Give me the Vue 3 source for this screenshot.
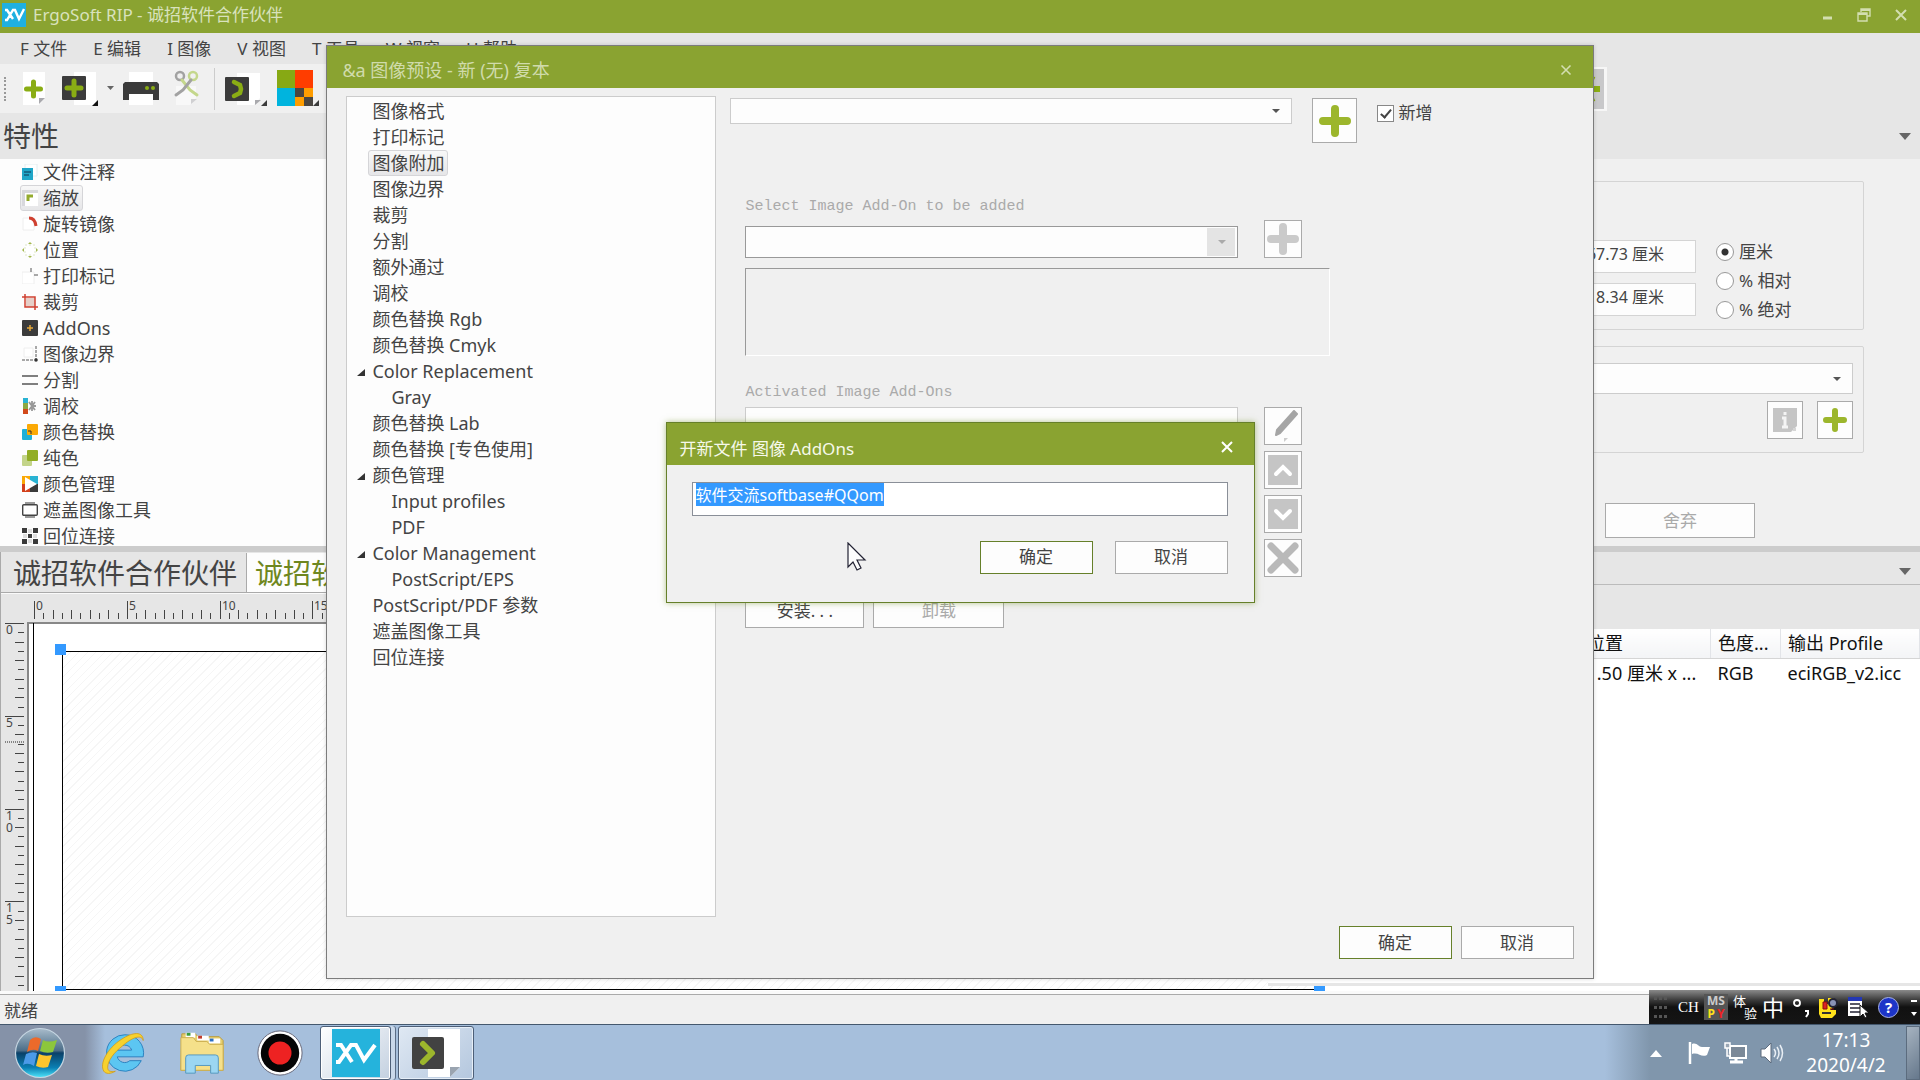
<template>
  <div class="desktop">
    <main class="app-window">
      <header class="title-bar">
        <svg class="app-logo" viewBox="0 0 24 24"><rect width="24" height="24" fill="#1fb0e0" /><path d="M3 7h2l6 9M3 17h2l6-10h2l4 9 5-10" fill="none" stroke="#fff" stroke-width="2.4" /></svg>
        <span class="app-title">ErgoSoft RIP - 诚招软件合作伙伴</span>
        <button class="win-btn" aria-label="最小化"><svg viewBox="0 0 14 14"><path d="M3 10h9" stroke="#d3deb0" stroke-width="3" /></svg></button>
        <button class="win-btn" aria-label="还原"><svg viewBox="0 0 14 14"><path d="M4 4V1h9v7h-3M1 5h9v8H1z" fill="none" stroke="#d3deb0" stroke-width="1.4" /><path d="M1 6h9M4 2h9" stroke="#d3deb0" stroke-width="2" /></svg></button>
        <button class="win-btn" aria-label="关闭"><svg viewBox="0 0 14 14"><path d="M2 2l10 10M12 2L2 12" stroke="#d3deb0" stroke-width="2" /></svg></button>
      </header>

      <nav class="menu-bar">
        <button v-for="m in menus" :key="m">{{ m }}</button>
      </nav>

      <div class="toolbar">
        <i class="grip"></i>
        <button aria-label="新建">
          <svg width="26" height="38" viewBox="0 0 26 38"><path d="M1 2h22v26l-6 7H1z" fill="#fff" /><path d="M17 28h6l-6 6z" fill="#a9a9ad" /><path d="M11.500 12v14M4.500 19h14" stroke="#8aad14" stroke-width="5" stroke-linecap="round" /></svg>
        </button>
        <button class="split" aria-label="打开">
          <svg width="54" height="38" viewBox="0 0 54 38"><path d="M12 2h22v33H12z" fill="#fff" /><rect y="6" width="24" height="24" rx="1" fill="#3b3b3b" /><path d="M12 11v14M5 18h14" stroke="#8aad14" stroke-width="5" stroke-linecap="round" /><path d="M36 30v6h-6z" fill="#111" /><path d="M45 16h7l-3.500 4z" fill="#666" /></svg>
        </button>
        <button aria-label="打印">
          <svg width="36" height="38" viewBox="0 0 36 38"><path d="M6 2h24v12H6zM6 22h24v13H6z" fill="#fff" /><path d="M2 12h32l2 2v16h-6v-6H6v6H0V14z" fill="#3b3b3b" /><circle cx="24" cy="18" r="2" fill="#8aad14" /><circle cx="30" cy="18" r="2" fill="#8aad14" /></svg>
        </button>
        <button aria-label="剪切">
          <svg width="27" height="38" viewBox="0 0 27 38"><path d="M3 16h20v12l-6 7H3z" fill="#f8f8f8" /><path d="M18 29h6l-6 5z" fill="#d0d0d2" /><g fill="none" stroke-width="3" stroke-linecap="round"><circle cx="7" cy="6" r="4" stroke="#a2a2a2" stroke-width="2.500" /><path d="M9 10l8 10 7 5" stroke="#c4d78c" /><circle cx="20" cy="6" r="4" stroke="#c4d78c" stroke-width="2.500" /><path d="M18 10l-8 10-7 5" stroke="#a2a2a2" /></g></svg>
        </button>
        <i class="divider"></i>
        <button class="export" aria-label="输出">
          <svg width="42" height="38" viewBox="0 0 42 38"><path d="M12 3h23v25l-6 7H12z" fill="#fff" /><path d="M30 30h6l-6 5z" fill="#a9a9ad" /><rect y="7" width="24" height="24" rx="1" fill="#3b3b3b" /><path d="M9 12l6 3 1 4-1 4-6 3" fill="none" stroke="#8aad14" stroke-width="4.500" stroke-linecap="round" /><path d="M42 30v6h-6z" fill="#3b3b3b" /></svg>
        </button>
        <button aria-label="颜色">
          <svg width="42" height="38" viewBox="0 0 42 38"><path d="M0 0h18v18H0z" fill="#87a914" /><path d="M18 0h18v18H18z" fill="#ff3d00" /><path d="M0 18h18v18H0z" fill="#00b4de" /><path d="M18 18h9v9h-9zM27 27h9v9h-9z" fill="#4a4642" /><path d="M27 18h9v9h-9zM18 27h9v9h-9z" fill="#ff9d00" /><path d="M42 30v6h-6z" fill="#3b3b3b" /></svg>
        </button>
        <button class="last-tool" aria-label="添加">
          <svg width="41" height="44" viewBox="0 0 41 44"><path d="M0 0h41v44H0z" fill="#f6f6f6" /><path d="M2 2h36v40H2z" fill="#c8c8ca" /><path d="M10 22h24M22 10l6 3M22 34l6-3" stroke="#8aad14" stroke-width="6" /></svg>
        </button>
      </div>

      <div class="pane-header">
        <h1>特性</h1>
        <i class="caret"></i>
      </div>

      <section class="properties">
        <ul class="prop-list">
          <li v-for="p in properties" :key="p.name" :class="{ selected: p.name === '缩放' }">
            <svg viewBox="0 0 16 16" v-html="p.icon"></svg>
            <span>{{ p.name }}</span>
          </li>
        </ul>
        <form class="prop-form" @submit.prevent>
          <fieldset class="size-box">
            <div class="size-inputs">
              <input v-model="width" aria-label="宽度" />
              <input v-model="height" aria-label="高度" />
            </div>
            <div class="units">
              <label v-for="u in units" :key="u"><input type="radio" name="unit" :value="u" v-model="unit" />{{ u }}</label>
            </div>
          </fieldset>
          <fieldset class="preset-box">
            <div class="combo"><select aria-label="预设"><option></option></select></div>
            <div class="preset-actions">
              <button type="button" aria-label="信息" disabled>
                <svg width="24" height="24" viewBox="0 0 24 24"><path d="M0 0h24v18l-6 6H0z" fill="#c5c5c5" /><path d="M12 4v3M9 10h3v8M9 19h6" fill="none" stroke="#f4f4f4" stroke-width="3" /><path d="M20 20h3v3h-3z" fill="#d5d5d5" /></svg>
              </button>
              <button type="button" aria-label="新增预设">
                <svg width="24" height="24" viewBox="0 0 24 24"><path d="M12 3v18M3 12h18" stroke="#9cb62c" stroke-width="6" stroke-linecap="round" /></svg>
              </button>
            </div>
          </fieldset>
          <button type="button" class="discard" disabled>舍弃</button>
        </form>
      </section>

      <section class="workspace">
        <div class="job">
          <div class="tabs">
            <button class="tab">诚招软件合作伙伴</button>
            <button class="tab active">诚招软件合作伙伴</button>
          </div>
          <div class="ruler-row">
            <svg class="ruler-h">
              <path :d="hTicks" stroke="#444" />
              <text v-for="l in hLabels" :key="l.text" :x="l.x" y="15">{{ l.text }}</text>
            </svg>
          </div>
          <div class="canvas-row">
            <svg class="ruler-v">
              <path :d="vTicks" stroke="#444" />
              <path d="M2 120h20" stroke="#222" stroke-dasharray="1 1" />
              <template v-for="l in vLabels" :key="l.y">
                <text v-for="(c, i) in l.text" :key="i" x="3" :y="l.y + i * 12">{{ c }}</text>
              </template>
            </svg>
            <div class="canvas">
              <div class="sheet">
                <i class="handle tl"></i><i class="handle bl"></i><i class="handle br"></i>
              </div>
            </div>
          </div>
        </div>
        <aside class="job-info">
          <div class="info-tabs"><i class="caret"></i></div>
          <div class="info-gap"></div>
          <table>
            <colgroup><col /><col class="c-pos" /><col class="c-mode" /><col class="c-prof" /></colgroup>
            <thead><tr><th></th><th>位置</th><th>色度...</th><th>输出 Profile</th></tr></thead>
            <tbody><tr><td></td><td>1.50 厘米 x ...</td><td>RGB</td><td>eciRGB_v2.icc</td></tr></tbody>
          </table>
        </aside>
      </section>

      <footer class="status-bar">就绪</footer>

      <div class="dialog-layer">
        <section class="dialog" role="dialog" aria-label="图像预设">
          <header class="dialog-title">
            <span>&amp;a 图像预设 - 新 (无) 复本</span>
            <button aria-label="关闭"><svg viewBox="0 0 14 14"><path d="M2.500 2.500l9 9M11.500 2.500l-9 9" stroke="#d3deb0" stroke-width="1.600" /></svg></button>
          </header>
          <div class="dialog-body">
            <ul class="tree">
              <li v-for="t in tree" :key="t.label" :class="{ child: t.child, selected: t.label === '图像附加' }">
                <i v-if="t.open" class="expander"></i><span>{{ t.label }}</span>
              </li>
            </ul>
            <div class="editor">
              <div class="preset-row">
                <div class="combo"><select aria-label="预设名称"><option></option></select></div>
                <button class="icon-btn large" aria-label="新增">
                  <svg width="32" height="32" viewBox="0 0 32 32"><path d="M16 4v24M4 16h24" stroke="#9cb62c" stroke-width="8" stroke-linecap="round" /></svg>
                </button>
                <label class="check"><input type="checkbox" checked />新增</label>
              </div>
              <div class="addons">
                <label class="mono" for="addon">Select Image Add-On to be added</label>
                <div class="addon-row">
                  <div class="combo disabled"><select id="addon" disabled><option></option></select></div>
                  <button class="icon-btn" aria-label="添加" disabled>
                    <svg width="32" height="32" viewBox="0 0 32 32"><path d="M16 4v24M4 16h24" stroke="#cacaca" stroke-width="8" stroke-linecap="round" /></svg>
                  </button>
                </div>
                <div class="description"></div>
                <span class="mono">Activated Image Add-Ons</span>
                <div class="active-row">
                  <div class="active-list"></div>
                  <div class="list-tools">
                    <button class="icon-btn" aria-label="编辑" disabled>
                      <svg width="32" height="32" viewBox="0 0 32 32"><path d="M27 1l3 3-17 19-4 2 1-5z" fill="#a5a5a5" stroke="#a5a5a5" stroke-width="2" stroke-linejoin="round" /><path d="M17 28h4l-4 4z" fill="#ccc" /></svg>
                    </button>
                    <button class="icon-btn" aria-label="上移" disabled>
                      <svg width="32" height="32" viewBox="0 0 32 32"><rect x="1" y="1" width="30" height="30" fill="#c5c5c5" /><path d="M9 20l7-7 7 7" fill="none" stroke="#fff" stroke-width="4" stroke-linecap="round" /></svg>
                    </button>
                    <button class="icon-btn" aria-label="下移" disabled>
                      <svg width="32" height="32" viewBox="0 0 32 32"><rect x="1" y="1" width="30" height="30" fill="#c5c5c5" /><path d="M9 13l7 7 7-7" fill="none" stroke="#fff" stroke-width="4" stroke-linecap="round" /></svg>
                    </button>
                    <button class="icon-btn" aria-label="删除" disabled>
                      <svg width="36" height="36" viewBox="0 0 36 36"><path d="M6 6l24 24M30 6L6 30" stroke="#b9b9b9" stroke-width="7" stroke-linecap="round" /></svg>
                    </button>
                  </div>
                </div>
                <div class="install-row">
                  <button class="btn install">安装. . .</button>
                  <button class="btn uninstall" disabled>卸载</button>
                </div>
              </div>
            </div>
          </div>
          <footer class="dialog-footer">
            <button class="btn primary">确定</button>
            <button class="btn">取消</button>
          </footer>
        </section>
      </div>

      <div class="dialog-layer">
        <section class="prompt" role="dialog" aria-label="开新文件">
          <header class="prompt-title">
            <span>开新文件 图像 AddOns</span>
            <button aria-label="关闭"><svg viewBox="0 0 14 14"><path d="M2 2l10 10M12 2L2 12" stroke="#fff" stroke-width="2" /></svg></button>
          </header>
          <div class="prompt-body">
            <input ref="nameInput" v-model="addonName" aria-label="名称" />
            <div class="prompt-actions">
              <button class="btn primary">确定</button>
              <button class="btn">取消</button>
            </div>
          </div>
          <svg class="cursor" viewBox="0 0 20 30"><path d="M1 1v24l5-5 4 8 4-2-4-8h8z" fill="#fdfdfd" stroke="#223" stroke-width="1.200" /></svg>
        </section>
      </div>

      <div class="ime-bar">
        <svg class="ime-grip" viewBox="0 0 19 22"><g fill="#555"><path v-for="y in [1, 10, 19]" :key="y" :d="`M0 ${y}h3v3h-3zM5 ${y}h3v3h-3zM10 ${y}h3v3h-3z`" /></g></svg>
        <span class="ch">CH</span>
        <span class="mspy"><b>MS</b><b><i>P</i><em>Y</em></b></span>
        <span class="ty"><i>体</i><i>验</i></span>
        <span class="zh">中</span>
        <svg width="20" height="24" viewBox="0 0 20 24"><circle cx="5" cy="8" r="3" fill="none" stroke="#fff" stroke-width="1.800" /><path d="M13 16h3v3l-2 3" fill="none" stroke="#fff" stroke-width="2" /></svg>
        <svg width="24" height="24" viewBox="0 0 24 24"><path d="M2 4h5v5h4V3h6v9l-4 3h6v4l-4 4H4l-2-4z" fill="#ffe11a" /><path d="M6 7h4v7H6zM13 14h4" fill="#d22" stroke="#811" /><circle cx="16" cy="8" r="4" fill="#8a93b5" stroke="#223" stroke-width="2" /><path d="M5 18h9" stroke="#333" stroke-width="2" /></svg>
        <svg width="24" height="24" viewBox="0 0 24 24"><path d="M2 2h14v19H2z" fill="#fff" /><path d="M2 2h14v4H2z" fill="#2337b5" /><path d="M4 9h10M4 13h10M4 17h10" stroke="#223" stroke-width="1.500" /><path d="M14 10v12l3-3 2 4 2-1-2-4h4z" fill="#fff" stroke="#111" /></svg>
        <span class="help">?</span>
        <svg class="ime-more" viewBox="0 0 6 24"><path d="M0 5h6v2H0zM0 17h6l-3 4z" fill="#fff" /></svg>
      </div>
    </main>

    <footer class="taskbar">
      <button class="start" aria-label="开始">
        <svg viewBox="0 0 52 52">
          <defs>
            <linearGradient id="orbTop" x1="0" y1="0" x2="0" y2="1"><stop offset="0" stop-color="#a9bccb" /><stop offset=".45" stop-color="#4b6d88" /><stop offset=".5" stop-color="#0a4068" /><stop offset=".8" stop-color="#0a80b4" /><stop offset="1" stop-color="#4fe6fb" /></linearGradient>
          </defs>
          <circle cx="26" cy="26" r="24.500" fill="url(#orbTop)" stroke="#c6d6e2" stroke-width="1.200" />
          <path d="M16 13q5-5 11-1l-3 12q-5-3-11 1z" fill="#ec6a2b" /><path d="M29 13q5 3 14 0l-4 12q-7 2-13-1z" fill="#8cc63c" />
          <path d="M12 27q6-3 11-1l-3 13q-6-4-11-1z" fill="#4b9ae8" /><path d="M25 27q6 3 13 1l-4 12q-6 2-12-1z" fill="#fcc52c" />
        </svg>
      </button>
      <button class="quick" aria-label="Internet Explorer">
        <svg viewBox="0 0 50 50">
          <path d="M26 6a19 19 0 1 0 17 27H31a8 8 0 0 1-13-4h27A19 19 0 0 0 26 6zm-8 16a8 8 0 0 1 15 0z" fill="#5cc6f2" stroke="#2a7fbe" />
          <path d="M45 12C45 2 34 3 22 11 8 20-1 36 4 44c2 3 7 3 12 0-5 1-8 0-8-4 0-7 7-16 15-22C33 9 43 5 45 12z" fill="#f7d12e" stroke="#d19a12" stroke-width=".8" />
        </svg>
      </button>
      <button class="quick" aria-label="资源管理器">
        <svg viewBox="0 0 50 50">
          <path d="M4 5h14l3 3h22l4 4v31H3z" fill="#e6cf6d" stroke="#b99a3c" /><path d="M8 4h10v5H8zM20 7h12v5H20zM32 10h12v5H32z" fill="#fff" /><path d="M9 4h4v3H9z" fill="#3a9b3a" /><path d="M21 7h4v3h-4z" fill="#c23b2b" /><path d="M33 10h4v3h-4z" fill="#2b6fc2" />
          <path d="M3 9h13l3 4h11l3 3h14v27H3z" fill="#f5e08a" stroke="#cdb050" /><path d="M8 46V30q0-3 3-3h28q3 0 3 3v16h-8v-8H18v8z" fill="#9bd6f2" stroke="#5596bd" />
        </svg>
      </button>
      <button class="quick" aria-label="录制">
        <svg viewBox="0 0 50 50"><circle cx="25" cy="25" r="23" fill="#fff" stroke="#667" /><circle cx="25" cy="25" r="20" fill="#050505" /><circle cx="25" cy="25" r="12" fill="#ee2222" /></svg>
      </button>
      <button class="task stacked" aria-label="ErgoSoft">
        <svg width="48" height="48" viewBox="0 0 48 48"><path d="M0 0h48v48H0z" fill="#25b3dc" /><path d="M4 16h5l11 17M4 33h3l12-17h5l8 15 11-15" fill="none" stroke="#fff" stroke-width="4" /></svg>
      </button>
      <button class="task" aria-label="ErgoSoft Jobs">
        <svg width="48" height="48" viewBox="0 0 48 48"><path d="M16 0h32v38l-10 10H16z" fill="#fff" /><path d="M38 38h10L38 48z" fill="#9aa4b0" /><rect y="8" width="32" height="32" rx="2" fill="#424242" /><path d="M11 15l9 9-9 9" fill="none" stroke="#9cb62c" stroke-width="6" stroke-linecap="round" stroke-linejoin="round" /></svg>
      </button>
      <div class="tray">
        <svg width="12" height="8" viewBox="0 0 12 8"><path d="M0 8l6-7 6 7z" fill="#fff" /></svg>
        <svg width="24" height="24" viewBox="0 0 24 24"><path d="M2 1v22" stroke="#fff" stroke-width="2.500" /><path d="M4 3c5-2 6 3 10 3h8l-3 8c-6 3-8-3-15-1z" fill="#fff" /></svg>
        <svg width="24" height="24" viewBox="0 0 24 24"><path d="M6 5h16v12H6z" fill="#7b8998" stroke="#fff" stroke-width="2" /><path d="M6 21h13M12 17v4" stroke="#fff" stroke-width="3" /><path d="M1 2h5v5H1zM3 7v8h3" fill="#9aa6b4" stroke="#fff" stroke-width="1.500" /></svg>
        <svg width="24" height="24" viewBox="0 0 24 24"><path d="M1 8h4l6-6v20l-6-6H1z" fill="#fff" stroke="#5c6a7c" /><path d="M14 8q3 4 0 8M17 6q4 6 0 12M20 4q5 8 0 16" fill="none" stroke="#e8eef4" stroke-width="1.500" /></svg>
      </div>
      <div class="clock"><span>17:13</span><span>2020/4/2</span></div>
      <button class="show-desktop" aria-label="显示桌面"></button>
    </footer>
  </div>
</template>

<script setup>
import { ref, onMounted } from 'vue';

const menus = ['F 文件', 'E 编辑', 'I 图像', 'V 视图', 'T 工具', 'W 视窗', 'H 帮助'];

const properties = [
  { name: '文件注释', icon: '<path d="M3 0h12v12H3z" fill="#fff" stroke="#e4eef0"/><path d="M0 4h11v12H0z" fill="#1fa6c8"/><path d="M2 8h7M2 11h5" stroke="#135a78" stroke-width="1.500"/>' },
  { name: '缩放', icon: '<path d="M0 0h16v16H0z" fill="#d8d8dc"/><path d="M3 3h13v13H3z" fill="#fff"/><path d="M6 11V6h5" fill="none" stroke="#94ab2e" stroke-width="3"/>' },
  { name: '旋转镜像', icon: '<path d="M1 2h11v12H1z" fill="#fff" stroke="#eee"/><path d="M7 2q6 0 7 8" fill="none" stroke="#cf4030" stroke-width="3"/>' },
  { name: '位置', icon: '<path d="M3 3h10v10H3z" fill="#fff" stroke="#dde6c6" stroke-dasharray="2 2"/><path d="M6 2l2-2 2 2zM6 14l2 2 2-2zM2 6L0 8l2 2zM14 6l2 2-2 2z" fill="#a3b84e"/>' },
  { name: '打印标记', icon: '<path d="M0 4h12v12H0z" fill="#fff" stroke="#eee"/><path d="M9 0v4M12 7h4" stroke="#555"/>' },
  { name: '裁剪', icon: '<path d="M4 4h9v9H4z" fill="#e6cfc8"/><path d="M3 0v13h13M0 3h13v13" fill="none" stroke="#cf4030" stroke-width="1.500"/>' },
  { name: 'AddOns', icon: '<rect width="16" height="16" rx="1" fill="#3b3b3b"/><path d="M8 5v6M5 8h6" stroke="#e5a83a" stroke-width="1.500"/>' },
  { name: '图像边界', icon: '<path d="M2 2h9v9H2z" fill="#fff" stroke="#eee"/><path d="M14 0v13M0 14h12" stroke="#555" stroke-dasharray="3 1"/><circle cx="14" cy="14" r="1.800" fill="#333"/>' },
  { name: '分割', icon: '<path d="M0 4h16M0 12h16" stroke="#555" stroke-width="1.500"/>' },
  { name: '调校', icon: '<path d="M1 0h5v5H1z" fill="#29b3d3"/><path d="M1 5h5v6H1z" fill="#8ba843"/><path d="M1 11h5v5H1z" fill="#d24a1b"/><path d="M10 3v10M7 4l6 8M7 12l6-8M9 8h5" stroke="#999" stroke-width="1.800"/>' },
  { name: '颜色替换', icon: '<rect y="5" width="10" height="11" rx="1" fill="#1fb0d8"/><rect x="5" width="11" height="11" rx="1" fill="#fba905"/><path d="M6 7h3v3" fill="none" stroke="#333"/>' },
  { name: '纯色', icon: '<rect y="5" width="10" height="11" rx="1" fill="#c3d489"/><rect x="5" width="11" height="11" rx="1" fill="#92ae25"/>' },
  { name: '颜色管理', icon: '<path d="M0 0h8v8H0z" fill="#fba905"/><path d="M8 0h8v8H8z" fill="#29b3d3"/><path d="M0 8h8v8H0z" fill="#d2401b"/><path d="M8 8h8v8H8z" fill="#3b3b3b"/><path d="M3 1l12 7-12 7z" fill="#fff"/>' },
  { name: '遮盖图像工具', icon: '<path d="M3 0h10v16H3z" fill="#999"/><rect x=".7" y="2.700" width="14.600" height="10.600" rx="1" fill="#fff" stroke="#444" stroke-width="1.400"/>' },
  { name: '回位连接', icon: '<path d="M0 0h5v5H0zM11 0h5v5h-5zM6 6h4v4H6zM0 11h5v5H0zM11 11h5v5h-5z" fill="#3b3b3b"/><path d="M6 1h4v4H6zM1 6h4v4H1zM11 6h4v4h-4zM6 11h4v4H6z" fill="#ddd"/>' },
];

const tree = [
  { label: '图像格式' },
  { label: '打印标记' },
  { label: '图像附加' },
  { label: '图像边界' },
  { label: '裁剪' },
  { label: '分割' },
  { label: '额外通过' },
  { label: '调校' },
  { label: '颜色替换 Rgb' },
  { label: '颜色替换 Cmyk' },
  { label: 'Color Replacement', open: true },
  { label: 'Gray', child: true },
  { label: '颜色替换 Lab' },
  { label: '颜色替换 [专色使用]' },
  { label: '颜色管理', open: true },
  { label: 'Input profiles', child: true },
  { label: 'PDF', child: true },
  { label: 'Color Management', open: true },
  { label: 'PostScript/EPS', child: true },
  { label: 'PostScript/PDF 参数' },
  { label: '遮盖图像工具' },
  { label: '回位连接' },
];

const width = ref('67.73 厘米');
const height = ref('18.34 厘米');
const units = ['厘米', '% 相对', '% 绝对'];
const unit = ref('厘米');
const addonName = ref('软件交流softbase#QQom');
const nameInput = ref(null);

// ten half-unit steps between two numbered marks
const STEP = 9.28;
const tickPos = (i, start) => Math.round(start + i * STEP) + 0.5;
const hTicks = Array.from({ length: 140 }, (_, i) => {
  const top = i % 10 === 0 ? 6 : i % 2 === 0 ? 15 : 18;
  return `M${tickPos(i, 31)} ${top}V24`;
}).join('');
const vTicks = Array.from({ length: 40 }, (_, i) => {
  const left = i % 10 === 0 ? 2 : i % 2 === 0 ? 12 : 15;
  return `M${left} ${tickPos(i, 1)}H21`;
}).join('');
const marks = ['0', '5', '10', '15'];
const hLabels = marks.map((text, i) => ({ text, x: 33 + Math.round(i * STEP * 10) }));
const vLabels = marks.map((text, i) => ({ text, y: 12 + Math.round(i * STEP * 10) }));

onMounted(() => {
  nameInput.value.focus();
  nameInput.value.select();
});
</script>

<style>
body { margin: 0; background: #e6e6e6; }
</style>

<style scoped>
.desktop { display: flex; flex-direction: column; height: 100vh; overflow: hidden; font-family: "Noto Sans", "Noto Sans CJK SC", sans-serif; font-size: 17px; color: #444; }
.desktop * { box-sizing: border-box; }
button, input, select { font: inherit; color: inherit; margin: 0; }
button { padding: 0; border: none; background: none; }
ul { list-style: none; margin: 0; padding: 0; }
svg { display: block; flex: none; }
i { font-style: normal; }

.app-window { position: relative; flex: 1; min-height: 0; display: flex; flex-direction: column; background: #e6e6e6; }
.title-bar { display: flex; align-items: center; height: 33px; flex: none; padding: 0 12px 4px 2px; background: #8aa331; color: #d9e2bd; }
.app-logo { width: 24px; height: 24px; }
.app-title { flex: 1; margin-left: 7px; font-size: 17px; line-height: 28px; }
.win-btn { width: 14px; margin-left: 23px; }
.win-btn svg { width: 14px; height: 14px; }
.menu-bar { display: flex; gap: 26px; height: 31px; flex: none; padding-left: 20px; }
.menu-bar button { line-height: 28px; white-space: nowrap; }
.toolbar { display: flex; align-items: center; gap: 14px; height: 49px; flex: none; padding-left: 4px; background: linear-gradient(90deg, #f0f0f0 327px, #e6e6e6 327px); }
.grip { width: 4px; height: 24px; border-left: 2px dotted #999; }
.divider { width: 1px; height: 42px; margin-right: -4px; background: #ccc; }
.split { margin-right: -7px; }
.export { margin-right: -4px; }
.last-tool { margin: 0 313px 0 auto; }
.pane-header { display: flex; align-items: center; justify-content: space-between; height: 46px; flex: none; padding: 0 9px 0 3px; }
.pane-header h1 { margin: 0; font-size: 28px; font-weight: 400; line-height: 40px; }
.caret { border: 6px solid transparent; border-top: 7px solid #666; border-bottom: 0; }

.properties { display: flex; height: 387px; flex: none; }
.prop-list { width: 400px; flex: none; padding-left: 20px; background: #fdfdfd; }
.prop-list li { display: flex; align-items: center; gap: 5px; width: max-content; height: 26px; padding: 0 3px 0 1px; border: 1px solid transparent; font-size: 18px; line-height: 22px; }
.prop-list .selected, .tree .selected { border-color: #d5d5d8; border-radius: 3px; background: linear-gradient(#f8f8f8, #e6e6e8); }
.prop-list svg { width: 16px; height: 16px; }
.prop-form { flex: 1; padding: 22px 56px 0 0; background: #f0f0f0; }
fieldset { margin: 0; padding: 0; border: 1px solid #d4d4d4; border-radius: 2px; }
.size-box { display: flex; justify-content: flex-end; align-items: flex-start; gap: 20px; height: 149px; padding-top: 58px; }
.size-inputs { display: flex; flex-direction: column; gap: 10px; }
.size-inputs input { width: 160px; height: 33px; padding: 0 31px 8px 0; border: 1px solid #d4d4d4; background: #fdfdfd; font-size: 16px; text-align: right; }
.units { display: flex; flex-direction: column; gap: 5px; width: 147px; }
.units label { display: flex; align-items: center; gap: 5px; height: 24px; line-height: 22px; white-space: pre; }
.units input { appearance: none; width: 18px; height: 18px; border: 1px solid #999; border-radius: 50%; background: #fff; }
.units input:checked { background: radial-gradient(#333 3px, #fff 4px); }
.preset-box { height: 107px; margin-top: 16px; padding: 16px 10px 0 200px; }
.combo { position: relative; border: 1px solid #ccc; background: #fdfdfd; }
.combo select { appearance: none; display: block; width: 100%; height: 100%; border: 0; background: none; opacity: 1; }
.combo::after { content: ""; position: absolute; right: 11px; top: calc(50% - 2px); border: 4px solid transparent; border-top: 4px solid #555; border-bottom: 0; pointer-events: none; }
.preset-box .combo { height: 31px; }
.preset-actions { display: flex; justify-content: flex-end; gap: 14px; margin-top: 7px; }
.preset-actions button { display: flex; align-items: center; justify-content: center; width: 36px; height: 38px; border: 1px solid #aaa; background: #fdfdfd; }
.discard { display: block; width: 150px; height: 35px; margin: 50px 109px 0 auto; border: 1px solid #aaa; background: #fdfdfd; color: #aaa; line-height: 30px; }

.workspace { position: relative; flex: 1; min-height: 0; border-top: 6px solid #ccc; border-bottom: 3px solid #fafafa; }
.job { display: flex; flex-direction: column; height: 100%; border-left: 1px solid #aaa; }
.tabs { display: flex; align-items: flex-end; height: 41px; flex: none; border-bottom: 1px solid #aaa; }
.tab { height: 39px; padding: 0 9px 0 12px; font-size: 28px; line-height: 40px; white-space: nowrap; }
.tab.active { padding-left: 8px; border-left: 1px solid #aaa; background: #fdfdfd; color: #6f8720; }
.ruler-row { height: 29px; flex: none; padding: 1px 0 0 2px; border-top: 1px solid #fafafa; background: #e6e6e6; overflow: hidden; }
.ruler-h { width: 100%; height: 27px; }
.ruler-h text, .ruler-v text { font-size: 12px; fill: #444; }
.canvas-row { display: flex; flex: 1; min-height: 0; padding-left: 2px; overflow: hidden; }
.ruler-v { width: 24px; height: 100%; }
.canvas { flex: 1; padding-left: 4px; border: solid #888; border-width: 2px 0 0 2px; background: #fff; }
.canvas::before { content: ""; position: absolute; left: 33px; top: 71px; bottom: 0; border-left: 1px solid #000; }
.sheet { position: relative; width: 1256px; height: calc(100% - 28px); margin: 27px 0 0 29px; border: 1px solid #000; background: repeating-linear-gradient(135deg, #fff 0 5px, #f6f6f6 5px 6px); }
.handle { position: absolute; width: 11px; height: 11px; background: #3399ff; }
.handle.tl { left: -8px; top: -8px; }
.handle.bl { left: -8px; bottom: -8px; }
.handle.br { right: -8px; bottom: -8px; }
.job-info { position: absolute; top: 0; right: 0; bottom: 5px; width: 652px; border-bottom: 3px solid #e6e6e6; background: #fff; }
.info-tabs { display: flex; align-items: center; justify-content: flex-end; height: 33px; padding: 10px 9px 0 0; border-bottom: 1px solid #bbb; background: #e6e6e6; }
.info-tabs .caret { margin-bottom: 4px; }
.info-gap { height: 44px; background: #e6e6e6; }
table { width: 100%; border-collapse: collapse; table-layout: fixed; color: #111; font-size: 18px; line-height: 24px; }
.c-pos { width: 131px; }
.c-mode { width: 70px; }
.c-prof { width: 139px; }
th { height: 29px; padding: 0 0 0 7px; border-right: 1px solid #e2e4e8; border-bottom: 1px solid #d5d5d5; background: linear-gradient(#fff, #f3f4f6); font-weight: 400; text-align: left; white-space: nowrap; }
td { height: 29px; padding: 0 0 0 7px; white-space: nowrap; }
.status-bar { height: 30px; flex: none; padding-left: 4px; border-top: 1px solid #aaa; background: #f0f0f0; line-height: 32px; }

.dialog-layer { position: absolute; inset: 0; display: flex; align-items: center; justify-content: center; pointer-events: none; }
.dialog, .prompt { pointer-events: auto; background: #f0f0f0; }
.dialog { display: flex; flex-direction: column; width: 66%; height: 934px; border: 1px solid #7c7c7c; box-shadow: 0 0 4px rgba(0, 0, 0, .15); }
.dialog-title { display: flex; align-items: center; justify-content: space-between; height: 42px; flex: none; padding: 6px 20px 0 15px; background: #8aa331; color: #d0dbab; font-size: 18px; line-height: 24px; }
.dialog-title svg, .prompt-title svg { width: 14px; height: 14px; }
.dialog-body { display: flex; flex: 1; min-height: 0; gap: 14px; padding: 8px 18px 0 19px; }
.tree { width: 370px; flex: none; padding-top: 1px; border: 1px solid #ccc; background: #fdfdfd; }
.tree li { position: relative; width: max-content; height: 26px; margin-left: 21px; padding: 0 3px; border: 1px solid transparent; font-size: 18px; line-height: 24px; }
.tree .child { margin-left: 40px; }
.expander { position: absolute; left: -12px; top: 10px; border-left: 8px solid transparent; border-bottom: 7px solid #333; }
.preset-row { display: flex; align-items: flex-start; padding-top: 2px; }
.preset-row .combo { width: 562px; height: 26px; }
.icon-btn { display: flex; align-items: center; justify-content: center; width: 38px; height: 38px; flex: none; border: 1px solid #aaa; background: #fdfdfd; }
.icon-btn.large { width: 45px; height: 45px; margin: 0 20px 0 20px; }
.check { display: flex; align-items: center; gap: 4px; height: 30px; line-height: 24px; }
.check input { appearance: none; position: relative; width: 17px; height: 17px; border: 1px solid #888; background: #fff; }
.check input:checked::after { content: ""; position: absolute; left: 5px; top: 1px; width: 4px; height: 9px; border: solid #444; border-width: 0 2px 2px 0; transform: rotate(40deg); }
.addons { padding: 52px 0 0 15px; }
.mono { display: block; font-family: "Liberation Mono", "Noto Sans CJK SC", monospace; font-size: 15px; line-height: 24px; color: #aaa; }
.addon-row { display: flex; align-items: flex-end; gap: 26px; margin-top: 1px; }
.addon-row .combo { width: 493px; height: 32px; border-color: #999; }
.combo.disabled::before { content: ""; position: absolute; right: 2px; top: 1px; bottom: 1px; width: 28px; background: #e4e4e4; }
.combo.disabled::after { border-top-color: #aaa; }
.description { width: 585px; height: 88px; margin: 10px 0 25px; border: 1px solid; border-color: #999 #fff #fff #999; }
.active-row { display: flex; gap: 26px; margin-top: 2px; }
.active-list { width: 493px; height: 180px; border: 1px solid #ccc; background: #fdfdfd; }
.list-tools { display: flex; flex-direction: column; justify-content: space-between; height: 170px; }
.install-row { display: flex; gap: 9px; margin-top: 7px; }
.btn { width: 113px; height: 33px; border: 1px solid #aaa; background: #fdfdfd; font-size: 17px; line-height: 28px; white-space: nowrap; }
.btn:disabled { color: #aaa; }
.btn.primary { border-color: #66802a; }
.btn.install { width: 119px; height: 34px; }
.btn.uninstall { width: 131px; height: 34px; }
.dialog-footer { display: flex; justify-content: flex-end; gap: 9px; padding: 9px 19px 19px; }

.prompt { position: relative; width: 589px; height: 181px; border: 1px solid #66802a; box-shadow: 0 0 6px rgba(110, 140, 30, .5); }
.prompt-title { display: flex; align-items: center; justify-content: space-between; height: 42px; padding: 7px 20px 0 13px; background: #8aa331; color: #f6f9ea; }
.prompt-body { padding: 17px 26px 0 25px; }
.prompt-body input { display: block; width: 100%; height: 34px; padding: 1px 2px 11px 3px; border: 1px solid #8a8f98; outline: none; background: #fff; font-size: 16px; line-height: 20px; }
.prompt-body input::selection { background: #3399ff; color: #fff; }
.prompt-actions { display: flex; justify-content: flex-end; gap: 22px; margin-top: 25px; }
.cursor { position: absolute; left: 180px; top: 119px; width: 20px; height: 30px; }

.ime-bar { position: absolute; right: 0; bottom: 0; display: flex; align-items: center; gap: 5px; width: 271px; height: 34px; padding: 0 3px 0 5px; background: linear-gradient(#8a8a8a, #3a3a3a 30%, #111 50%, #151515); color: #fff; }
.ime-bar > * { flex: none; }
.ime-grip { width: 19px; height: 22px; }
.ch { width: 21px; font-family: "Liberation Serif", serif; font-size: 15px; }
.mspy { width: 24px; height: 26px; background: #555; color: #ccc; font-size: 12px; line-height: 13px; }
.mspy b { display: block; text-align: center; }
.mspy i { color: #ffe11a; }
.mspy em { color: #e22; font-style: normal; padding-left: 2px; }
.ty { width: 24px; height: 24px; font-size: 13px; line-height: 12px; }
.ty i { display: block; }
.ty i + i { text-align: right; }
.zh { width: 25px; font-size: 22px; line-height: 28px; }
.help { width: 21px; height: 21px; margin-left: 3px; border: 1px solid #aab4e8; border-radius: 50%; background: #1d35c8; font-size: 15px; font-weight: 700; line-height: 19px; text-align: center; }
.ime-more { width: 6px; height: 24px; margin-left: auto; }

.taskbar { display: flex; align-items: center; height: 56px; flex: none; padding-left: 14px; border-top: 1px solid #44586e; background: linear-gradient(90deg, #8592a8 0, #8592a8 85px, #a6bfdc 105px, #a6bfdc calc(100% - 315px), #8096ac calc(100% - 270px)); }
.start { width: 52px; height: 52px; }
.start svg, .quick svg { width: 100%; height: 100%; }
.quick { width: 48px; height: 48px; margin-left: 30px; }
.quick:nth-of-type(2) { margin-left: 34px; }
.task { display: flex; align-items: center; justify-content: center; width: 76px; height: 54px; border: 1px solid #4d5f78; border-radius: 3px; background: linear-gradient(135deg, #dfe8f3, #b4c7de); box-shadow: inset 0 0 0 1px #e6eef7; }
.task.stacked { width: 71px; margin: 0 7px 0 16px; background: linear-gradient(135deg, #fff, #c3d0e0); box-shadow: inset 0 0 0 1px #fff, 4px 0 0 #c9d8ea, 5px 0 0 #5b6d86; }
.tray { display: flex; align-items: center; gap: 12px; margin-left: auto; }
.tray svg:first-child { margin-right: 14px; }
.clock { display: flex; flex-direction: column; align-items: center; width: 120px; padding-left: 4px; color: #fff; font-size: 19px; line-height: 25px; }
.show-desktop { width: 14px; height: 54px; margin-left: 2px; border: 1px solid #5c6c7e; background: linear-gradient(135deg, #a6b3c0, #66788c); }
</style>
